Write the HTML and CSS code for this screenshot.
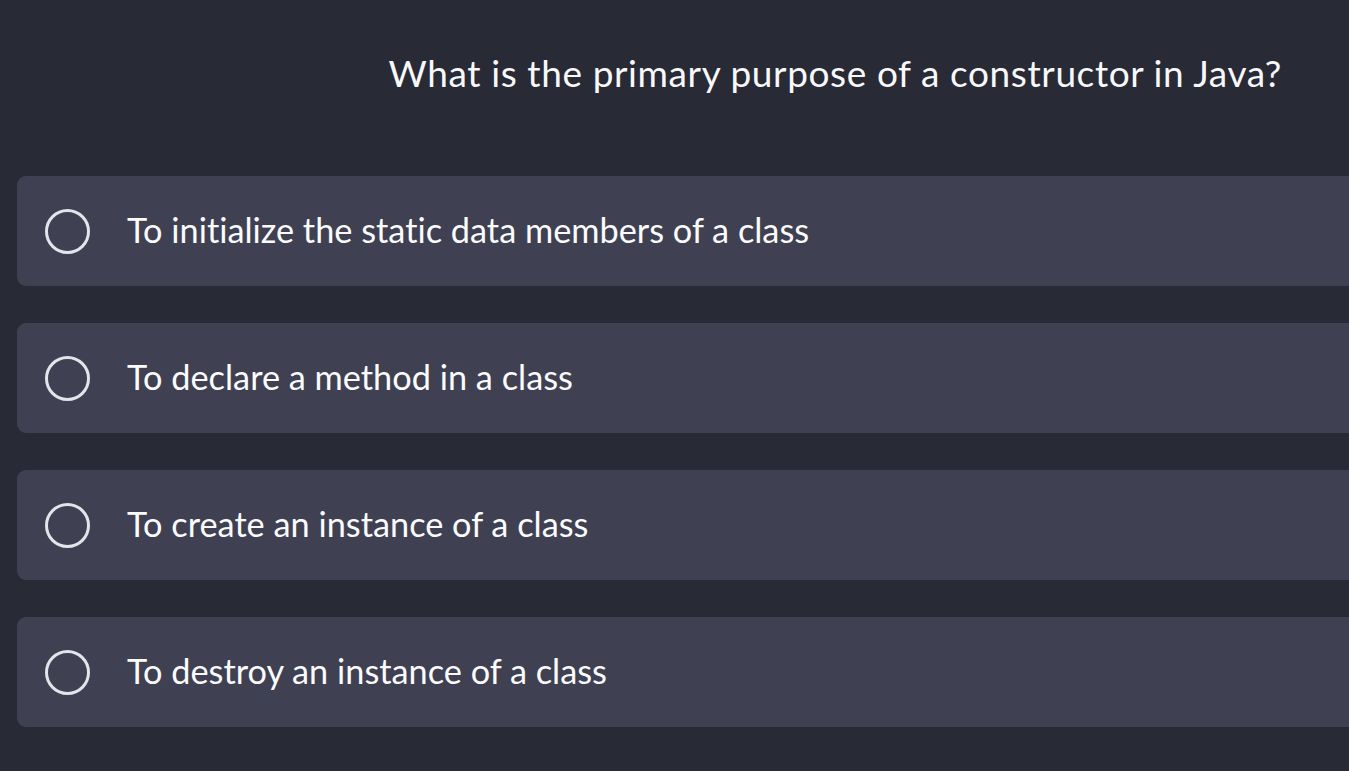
FILE: index.html
```html
<!DOCTYPE html>
<html>
<head>
<meta charset="utf-8">
<link rel="stylesheet" href="styles.css">
</head>
<body>
<main class="quiz">
  <h1 class="question">What is the primary purpose of a constructor in Java?</h1>
  <div class="options">
    <label class="option"><span class="radio"></span><span class="label">To initialize the static data members of a class</span></label>
    <label class="option"><span class="radio"></span><span class="label">To declare a method in a class</span></label>
    <label class="option"><span class="radio"></span><span class="label">To create an instance of a class</span></label>
    <label class="option"><span class="radio"></span><span class="label">To destroy an instance of a class</span></label>
  </div>
</main>
</body>
</html>
```
FILE: styles.css
```css
html, body {
  margin: 0;
  padding: 0;
  background: #282a36;
  overflow: hidden;
}
body {
  width: 1349px;
  height: 771px;
  font-family: Lato, "Liberation Sans", sans-serif;
  font-variant-ligatures: none;
  color: #f8f8fa;
}
.quiz {
  padding-left: 17px;
}
.question {
  margin: 0;
  height: 176px;
  box-sizing: border-box;
  padding: 49px 67px 0 0;
  text-align: right;
  font-size: 37px;
  letter-spacing: 0.6px;
  font-weight: 400;
  line-height: 48px;
}
.options {
  display: flex;
  flex-direction: column;
  gap: 37px;
  margin-right: -20px;
}
.option {
  display: flex;
  align-items: center;
  height: 110px;
  background: #3f4152;
  border-radius: 9px;
  padding-left: 28px;
  box-sizing: border-box;
}
.radio {
  width: 45px;
  height: 45px;
  box-sizing: border-box;
  border: 3.5px solid #e4e4ea;
  border-radius: 50%;
  flex: none;
}
.label {
  margin-left: 37px;
  margin-bottom: 4px;
  font-size: 34.3px;
  color: #fbfbfd;
}
```
